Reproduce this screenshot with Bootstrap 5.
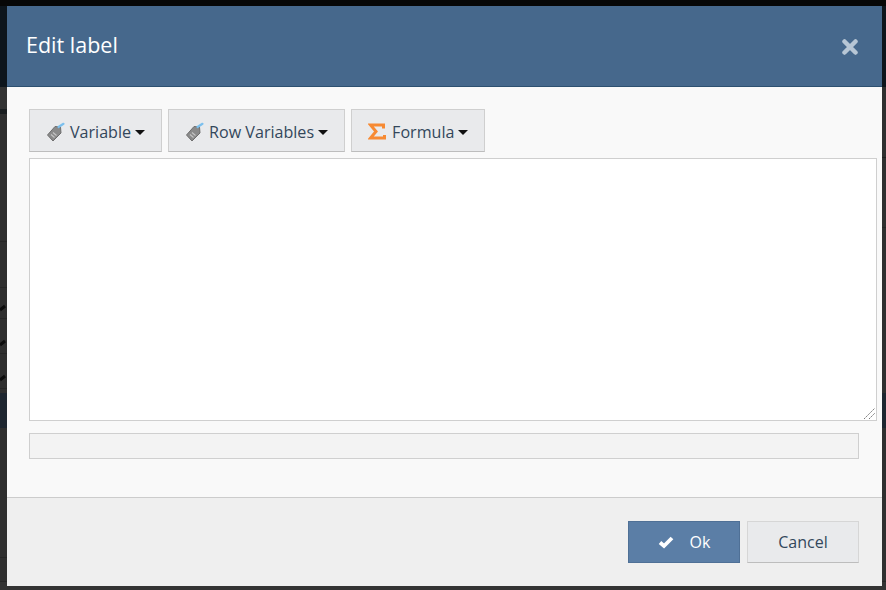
<!DOCTYPE html>
<html lang="en">
<head>
    <meta charset="UTF-8">
    <meta name="viewport" content="width=device-width, initial-scale=1.0">
    <title>Edit label</title>
    <link href="https://cdn.jsdelivr.net/npm/bootstrap@5.3.0/dist/css/bootstrap.min.css" rel="stylesheet">
    <style>
        html, body {
            height: 100%;
        }
        body {
            background:
                linear-gradient(#070707 0 6px, #0d151c 6px 87px, #333 87px 109px, #1a1e20 109px 114px, #2f2f2f 114px 241px, #262626 241px 242px, #2f2f2f 242px 287px, #262626 287px 288px, #2f2f2f 288px 318px, #262626 318px 319px, #2f2f2f 319px 353px, #262626 353px 354px, #2f2f2f 354px 388px, #262626 388px 389px, #2f2f2f 389px 393px, #1e2630 393px 428px, #2f2f2f 428px 557px, #262626 557px 558px, #2f2f2f 558px 581px, #262626 581px 582px, #333 582px) left top / 7px 100% no-repeat,
                linear-gradient(#070707 0 6px, #0d151c 6px 87px, #2f2f2f 87px 157px, #1f1f1f 157px 158px, #2f2f2f 158px 227px, #262626 227px 228px, #2f2f2f 228px 393px, #1e2630 393px 428px, #2f2f2f 428px 581px, #262626 581px 582px, #333 582px);
            font-family: "Open Sans", sans-serif;
            font-size: 16px;
            color: #33475b;
            padding: 6px 4px 4px 7px;
            overflow: hidden;
        }
        .back-marks {
            position: absolute;
            left: 0;
            top: 0;
        }
        .dlg-box {
            position: relative;
            height: 580px;
            background: #f9f9f9;
        }
        .dlg-head {
            height: 81px;
            background: #46688c;
            border-bottom: 1px solid #2d5070;
            padding: 0 24px 0 19px;
            color: #fff;
        }
        .dlg-title {
            font-size: 21.500px;
            font-weight: 400;
            margin: 0 0 2px;
        }
        .dlg-close {
            background: none;
            border: 0;
            padding: 2px 0 0;
            line-height: 0;
        }
        .dlg-body {
            height: 410px;
            padding: 22px 5px 0 22px;
        }
        .tool-row {
            gap: 6px;
        }
        .tool-btn {
            height: 43px;
            background: #e9eaec;
            border: 1px solid #cfcfcf;
            border-bottom-color: #bdbdbd;
            border-radius: 0;
            color: #33475b;
            font-size: 16.100px;
            padding: 3px 16px 0;
        }
        .tool-btn:hover {
            background: #dfe0e2;
        }
        .tool-btn::after {
            border-top: 5px solid #111;
            border-left: 5px solid transparent;
            border-right: 5px solid transparent;
            margin-left: 0;
        }
        .area-wrap {
            position: relative;
            margin-top: 6px;
        }
        .text-area {
            height: 263px;
            border: 1px solid #cfcfcf;
            border-radius: 0;
            background: #fff;
            font-size: 16px;
            resize: none;
        }
        .grip-mark {
            position: absolute;
            right: 1px;
            bottom: 1px;
            pointer-events: none;
        }
        .status-box {
            height: 26px;
            margin-top: 12px;
            margin-right: 18px;
            background: #f3f3f3;
            border: 1px solid #cfcfcf;
        }
        .dlg-foot {
            height: 89px;
            background: #efefef;
            border-top: 1px solid #cccccc;
            padding: 23px 23px 0 0;
            gap: 7px;
        }
        .foot-btn {
            width: 112px;
            height: 42px;
            border-radius: 0;
            font-size: 16px;
            padding: 0;
        }
        .ok-btn {
            background: #5b7ea6;
            border: 1px solid #4f7096;
            color: #fff;
        }
        .ok-btn:hover {
            background: #4f7096;
            color: #fff;
        }
        .cancel-btn {
            background: #e9eaec;
            border: 1px solid #d6d6d6;
            border-bottom-color: #bdbdbd;
            color: #33475b;
        }
    </style>
</head>
<body>
    <svg class="back-marks" width="7" height="590" viewBox="0 0 7 590">
        <path d="M0 310 5 306M0 345 5 341M0 380 5 376" stroke="#0c0c0c" stroke-width="3"/>
    </svg>
    <div class="dlg-box d-flex flex-column">
        <div class="dlg-head d-flex align-items-center justify-content-between">
            <h5 class="dlg-title">Edit label</h5>
            <button class="dlg-close" type="button" aria-label="Close">
                <svg width="16" height="16" viewBox="0 0 16 16"><path d="M2.500 2.500 13.500 13.500M13.500 2.500 2.500 13.500" fill="none" stroke="#b7c6d5" stroke-width="4.500" stroke-linecap="round"/></svg>
            </button>
        </div>
        <div class="dlg-body">
            <div class="d-flex tool-row">
                <div class="dropdown">
                    <button class="btn tool-btn dropdown-toggle d-flex align-items-center gap-1" type="button" data-bs-toggle="dropdown">
                        <svg width="20" height="20" viewBox="0 0 20 20"><path d="M1.500 13 9 4.500 14.500 5 15 11 7 19Z" fill="#8a8a8a" stroke="#6e6e6e"/><path d="M5 12.500 8.500 15.500M7 10.500 10.500 13.500" stroke="#c4c4c4" stroke-width="1.200"/><path d="M12.500 5 17.500 1.800" stroke="#7cc0ee" stroke-width="2.200" stroke-linecap="round"/></svg>
                        Variable
                    </button>
                </div>
                <div class="dropdown">
                    <button class="btn tool-btn dropdown-toggle d-flex align-items-center gap-1" type="button" data-bs-toggle="dropdown">
                        <svg width="20" height="20" viewBox="0 0 20 20"><path d="M1.500 13 9 4.500 14.500 5 15 11 7 19Z" fill="#8a8a8a" stroke="#6e6e6e"/><path d="M5 12.500 8.500 15.500M7 10.500 10.500 13.500" stroke="#c4c4c4" stroke-width="1.200"/><path d="M12.500 5 17.500 1.800" stroke="#7cc0ee" stroke-width="2.200" stroke-linecap="round"/></svg>
                        Row Variables
                    </button>
                </div>
                <div class="dropdown">
                    <button class="btn tool-btn dropdown-toggle d-flex align-items-center gap-1" type="button" data-bs-toggle="dropdown">
                        <svg width="20" height="20" viewBox="0 0 20 20"><path d="M15.500 6.500V3H2.500L8 9.500 2.500 16H16.500V13" fill="none" stroke="#f78a33" stroke-width="3"/></svg>
                        Formula
                    </button>
                </div>
            </div>
            <div class="area-wrap">
                <textarea class="form-control text-area"></textarea>
                <svg class="grip-mark" width="14" height="14" viewBox="0 0 14 14"><path d="M2 13 13 2M7 13 13 7" stroke="#777" stroke-width="1" stroke-dasharray="2 1"/></svg>
            </div>
            <div class="status-box"></div>
        </div>
        <div class="dlg-foot d-flex justify-content-end">
            <button class="btn foot-btn ok-btn d-flex align-items-center justify-content-center gap-3" type="button">
                <svg width="16" height="14" viewBox="0 0 16 14"><path d="M2 7.500 6 11 14 3" fill="none" stroke="#fff" stroke-width="3.800"/></svg>
                Ok
            </button>
            <button class="btn foot-btn cancel-btn" type="button">Cancel</button>
        </div>
    </div>
    <script src="https://cdn.jsdelivr.net/npm/bootstrap@5.3.0/dist/js/bootstrap.bundle.min.js"></script>
</body>
</html>
